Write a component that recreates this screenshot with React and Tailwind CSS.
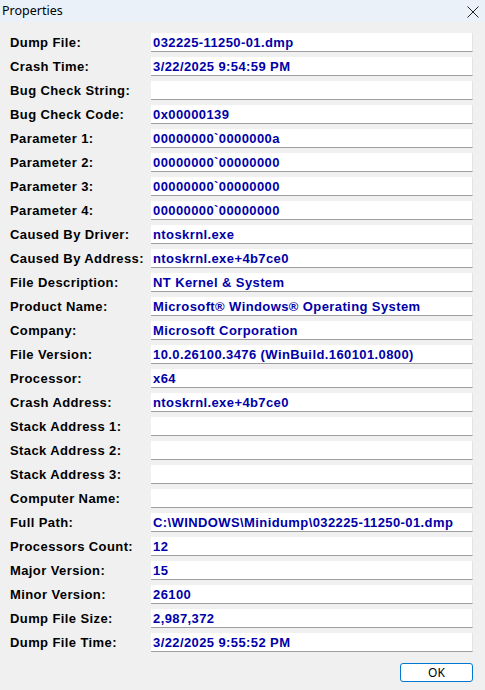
import React from "react";

const rows = [
  ["Dump File:", "032225-11250-01.dmp"],
  ["Crash Time:", "3/22/2025 9:54:59 PM"],
  ["Bug Check String:", ""],
  ["Bug Check Code:", "0x00000139"],
  ["Parameter 1:", "00000000`0000000a"],
  ["Parameter 2:", "00000000`00000000"],
  ["Parameter 3:", "00000000`00000000"],
  ["Parameter 4:", "00000000`00000000"],
  ["Caused By Driver:", "ntoskrnl.exe"],
  ["Caused By Address:", "ntoskrnl.exe+4b7ce0"],
  ["File Description:", "NT Kernel & System"],
  ["Product Name:", "Microsoft® Windows® Operating System"],
  ["Company:", "Microsoft Corporation"],
  ["File Version:", "10.0.26100.3476 (WinBuild.160101.0800)"],
  ["Processor:", "x64"],
  ["Crash Address:", "ntoskrnl.exe+4b7ce0"],
  ["Stack Address 1:", ""],
  ["Stack Address 2:", ""],
  ["Stack Address 3:", ""],
  ["Computer Name:", ""],
  ["Full Path:", "C:\\WINDOWS\\Minidump\\032225-11250-01.dmp"],
  ["Processors Count:", "12"],
  ["Major Version:", "15"],
  ["Minor Version:", "26100"],
  ["Dump File Size:", "2,987,372"],
  ["Dump File Time:", "3/22/2025 9:55:52 PM"],
];

export default function App() {
  return (
    <div className="w-[485px] h-[690px] bg-[#f0f0f0] flex flex-col overflow-hidden font-['Liberation_Sans',sans-serif]">
      <div className="h-[22px] bg-[#eaf1f8] flex items-center justify-between pl-[2px] pr-[6px]">
        <span className="text-[12.5px] text-black font-['Noto_Sans',sans-serif] leading-none">Properties</span>
        <svg width="12" height="12" viewBox="0 0 12 12" className="mt-[1px]">
          <path d="M0.5 0.5 L11.5 11.5 M11.5 0.5 L0.5 11.5" stroke="#222" strokeWidth="1" fill="none" />
        </svg>
      </div>
      <div className="flex flex-col pt-[11px] pl-[10px]">
        {rows.map(([label, value], i) => (
          <div key={i} className="flex h-[24px]">
            <div className="w-[141px] h-[19px] flex items-center text-[13px] font-bold text-black tracking-[0.4px] leading-none">
              {label}
            </div>
            <div className="w-[322px] h-[19px] bg-white border-b border-b-[#a0a0a0] border-r border-r-[#e3e3e3] flex items-center pl-[2px] text-[13px] font-bold text-[#0000a8] tracking-[0.4px] leading-none whitespace-nowrap">
              {value}
            </div>
          </div>
        ))}
      </div>
      <div className="flex justify-end pr-[12px] mt-[6px]">
        <button className="w-[73px] h-[19px] bg-white border border-[#0078d4] rounded-[3px] text-[12px] text-black font-['Noto_Sans',sans-serif] leading-none flex items-center justify-center">
          OK
        </button>
      </div>
    </div>
  );
}
